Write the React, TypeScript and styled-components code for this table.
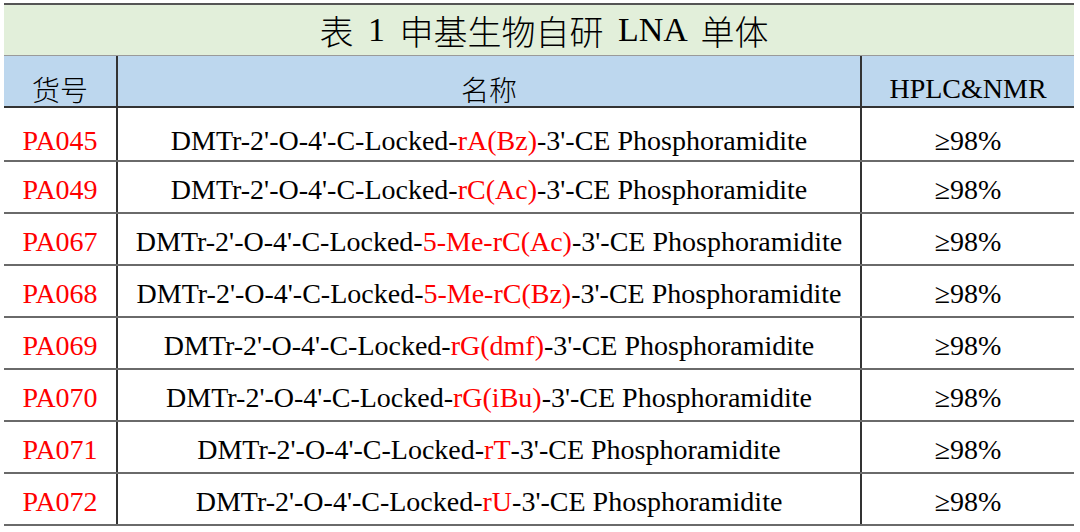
import React from "react"
import styled, { createGlobalStyle } from "styled-components"

const GlobalStyle = createGlobalStyle`
  html, body {
    margin: 0;
    padding: 0;
    background: #fff;
  }
  body {
    font-family: "Liberation Serif", "Noto Sans CJK SC", serif;
    color: #000;
  }
`

type Part = { text: string; red?: boolean }

type Item = {
  code: string
  name: Part[]
  purity: string
}

const prefix = "DMTr-2'-O-4'-C-Locked-"
const suffix = "-3'-CE Phosphoramidite"

const mono = (mod: string): Part[] => [
  { text: prefix },
  { text: mod, red: true },
  { text: suffix },
]

const items: Item[] = [
  { code: "PA045", name: mono("rA(Bz)"), purity: "≥98%" },
  { code: "PA049", name: mono("rC(Ac)"), purity: "≥98%" },
  { code: "PA067", name: mono("5-Me-rC(Ac)"), purity: "≥98%" },
  { code: "PA068", name: mono("5-Me-rC(Bz)"), purity: "≥98%" },
  { code: "PA069", name: mono("rG(dmf)"), purity: "≥98%" },
  { code: "PA070", name: mono("rG(iBu)"), purity: "≥98%" },
  { code: "PA071", name: mono("rT"), purity: "≥98%" },
  { code: "PA072", name: mono("rU"), purity: "≥98%" },
]

export default function App() {
  return (
    <>
      <GlobalStyle />
      <Page>
        <Table>
          <Caption>
            <CjkText>表</CjkText> 1 <CjkText>申基生物自研</CjkText> LNA{" "}
            <CjkText>单体</CjkText>
          </Caption>
          <HeadRow>
            <HeadCell>
              <CjkText>货号</CjkText>
            </HeadCell>
            <HeadCell $divider>
              <CjkText>名称</CjkText>
            </HeadCell>
            <HeadCell $divider>HPLC&amp;NMR</HeadCell>
          </HeadRow>
          {items.map((item, i) => (
            <Row key={item.code} $first={i === 0}>
              <Cell $first={i === 0}>
                <Red>{item.code}</Red>
              </Cell>
              <Cell $divider $first={i === 0}>
                {item.name.map((p, j) =>
                  p.red ? <Red key={j}>{p.text}</Red> : <span key={j}>{p.text}</span>
                )}
              </Cell>
              <Cell $divider $first={i === 0}>
                {item.purity}
              </Cell>
            </Row>
          ))}
        </Table>
      </Page>
    </>
  )
}

const Page = styled.div`
  padding: 3px 6px 0 4px;
  width: 1080px;
  box-sizing: border-box;
`

const Table = styled.div`
  width: 1070px;
  display: flex;
  flex-direction: column;
`

const CjkText = styled.span`
  font-family: "Noto Sans CJK SC", sans-serif;
  font-weight: 300;
`

const Caption = styled.div`
  height: 53px;
  border-top: 2px solid #555;
  border-bottom: 1px solid #9a9a9a;
  background: #e2efda;
  display: flex;
  align-items: center;
  justify-content: center;
  font-size: 34px;
  white-space: pre;
  padding-left: 10px;
  box-sizing: border-box;
  word-spacing: 6px;
`

const columns = "112px 744px 214px"

const HeadRow = styled.div`
  display: grid;
  grid-template-columns: ${columns};
  height: 52px;
  background: #bdd7ee;
  border-bottom: 2px solid #333;
  box-sizing: border-box;
`

const HeadCell = styled.div<{ $divider?: boolean }>`
  display: flex;
  align-items: center;
  justify-content: center;
  padding-top: 13px;
  box-sizing: border-box;
  font-size: 28px;
  border-left: ${(p) => (p.$divider ? "2px solid #333" : "none")};
`

const Row = styled.div<{ $first?: boolean }>`
  display: grid;
  grid-template-columns: ${columns};
  height: ${(p) => (p.$first ? "54px" : "52px")};
  border-bottom: 2px solid #6a6a6a;
  box-sizing: border-box;
`

const Cell = styled.div<{ $divider?: boolean; $first?: boolean }>`
  display: flex;
  align-items: center;
  justify-content: center;
  padding-top: ${(p) => (p.$first ? "13px" : "6px")};
  box-sizing: border-box;
  font-size: 28px;
  white-space: pre;
  border-left: ${(p) => (p.$divider ? "2px solid #333" : "none")};
`

const Red = styled.span`
  color: #ff0000;
`
